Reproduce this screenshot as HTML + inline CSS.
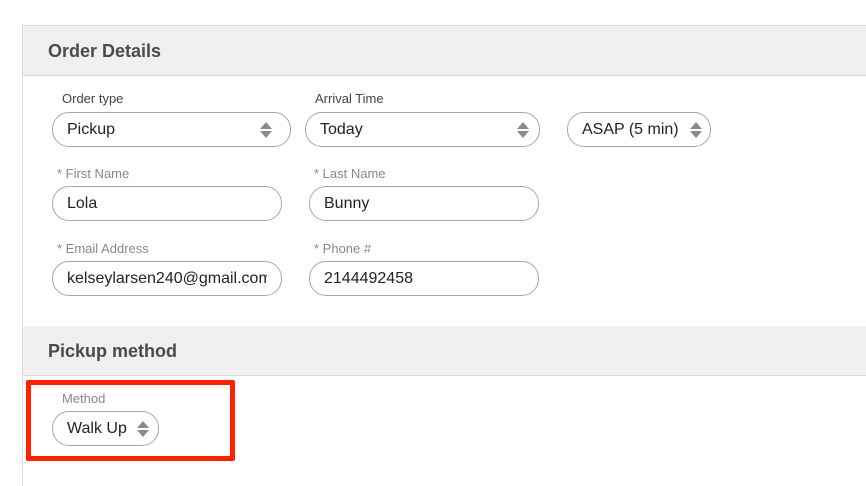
<!DOCTYPE html>
<html><head><style>
body{margin:0;width:866px;height:471px;background:#fff;font-family:"Liberation Sans",Arial,sans-serif;position:relative;overflow:hidden}
.a{position:absolute}
.panel{left:22px;top:25px;width:860px;height:460px;border-left:1px solid #dcdcdc;border-top:1px solid #dcdcdc}
.band{left:23px;width:850px;background:#f0f0f0;border-bottom:1px solid #dadada}
.band span{position:absolute;left:25px;font-weight:bold;font-size:18px;color:#4a4a4a}
.lbl{font-size:13px;color:#444}
.lbl2{font-size:13px;color:#888}
.f{border:1px solid #a8a8a8;border-radius:17px;font-size:16px;color:#222;line-height:33px;padding-left:14px;box-sizing:border-box;height:35px;overflow:hidden;white-space:nowrap}
.arr{position:absolute;right:14px;top:9px;width:12px;height:16px}
.arr:before{content:"";position:absolute;left:0;top:0;border-left:6px solid transparent;border-right:6px solid transparent;border-bottom:7px solid #8a8a8a}
.arr:after{content:"";position:absolute;left:0;top:9px;border-left:6px solid transparent;border-right:6px solid transparent;border-top:7px solid #8a8a8a}
</style></head><body>
<div class="a panel"></div>
<div class="a band" style="top:26px;height:49px"><span style="top:15px">Order Details</span></div>
<div class="a lbl" style="left:62px;top:91px">Order type</div>
<div class="a lbl" style="left:315px;top:91px">Arrival Time</div>
<div class="a f" style="left:52px;top:112px;width:239px">Pickup<i class="arr" style="right:18px"></i></div>
<div class="a f" style="left:305px;top:112px;width:235px">Today<i class="arr" style="right:10px"></i></div>
<div class="a f" style="left:567px;top:112px;width:144px">ASAP (5 min)<i class="arr" style="right:8px"></i></div>
<div class="a lbl2" style="left:57px;top:166px">* First Name</div>
<div class="a lbl2" style="left:314px;top:166px">* Last Name</div>
<div class="a f" style="left:52px;top:186px;width:230px">Lola</div>
<div class="a f" style="left:309px;top:186px;width:230px">Bunny</div>
<div class="a lbl2" style="left:57px;top:241px">* Email Address</div>
<div class="a lbl2" style="left:314px;top:241px">* Phone #</div>
<div class="a f" style="left:52px;top:261px;width:230px;padding-right:14px"><div style="overflow:hidden;width:200px">kelseylarsen240@gmail.com</div></div>
<div class="a f" style="left:309px;top:261px;width:230px">2144492458</div>
<div class="a band" style="top:326px;height:49px;border-top:0"><span style="top:15px">Pickup method</span></div>
<div class="a" style="left:26px;top:380px;width:199px;height:71px;border:5px solid #ff2200;border-radius:2px"></div>
<div class="a lbl2" style="left:62px;top:391px">Method</div>
<div class="a f" style="left:52px;top:411px;width:107px">Walk Up<i class="arr" style="right:9px"></i></div>
</body></html>
